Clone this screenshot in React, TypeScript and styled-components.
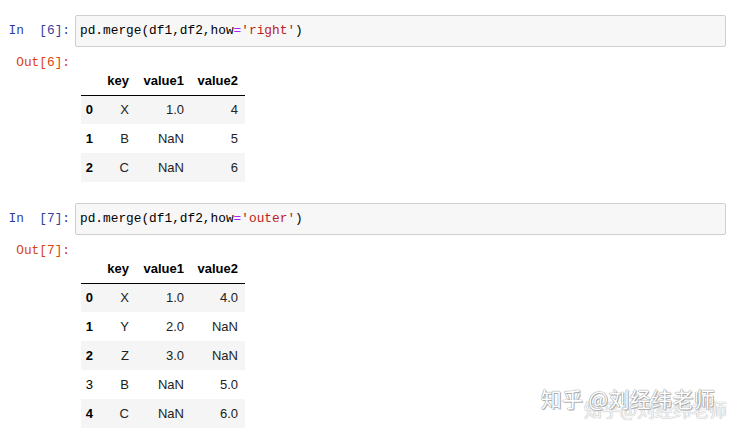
import styled, { createGlobalStyle } from "styled-components";

const GlobalStyle = createGlobalStyle`
  html, body {
    margin: 0;
    padding: 0;
    background: #fff;
  }
  body {
    width: 733px;
    height: 434px;
    overflow: hidden;
    position: relative;
  }
`;

const Notebook = styled.div`
  padding-top: 15px;
  font-family: "Liberation Sans", Arial, sans-serif;
`;

const Cell = styled.div`
  margin-bottom: 21px;
`;

const Row = styled.div`
  display: flex;
  align-items: flex-start;
`;

const Prompt = styled.div<{ $kind: "in" | "out" }>`
  width: 70px;
  padding-right: 5px;
  flex: none;
  text-align: right;
  font-family: "Liberation Mono", "Courier New", monospace;
  font-size: 12.8px;
  white-space: pre;
  color: ${(p) => (p.$kind === "in" ? "#303F9F" : "#D84315")};
  line-height: ${(p) => (p.$kind === "in" ? "32px" : "15px")};
  padding-top: ${(p) => (p.$kind === "in" ? "0" : "3px")};
`;

const InputBox = styled.div`
  flex: 1;
  margin-right: 7px;
  height: 32px;
  box-sizing: border-box;
  border: 1px solid #cfcfcf;
  border-radius: 2px;
  background: #f7f7f7;
  padding-left: 4px;
  font-family: "Liberation Mono", "Courier New", monospace;
  font-size: 12.8px;
  line-height: 30px;
  color: #000;
  white-space: pre;
`;

const Op = styled.span`
  color: #aa22ff;
`;

const Str = styled.span`
  color: #ba2121;
`;

const OutputRow = styled(Row)`
  margin-top: 5px;
`;

const Table = styled.table`
  margin-top: 15px;
  margin-left: 6px;
  border-collapse: collapse;
  table-layout: fixed;
  font-size: 13px;
  color: #000;
`;

const HeadCell = styled.th<{ $w: number }>`
  width: ${(p) => p.$w}px;
  box-sizing: border-box;
  height: 28px;
  padding: 0 7px 0 0;
  text-align: right;
  font-weight: bold;
  border-bottom: 1px solid #000;
  vertical-align: middle;
`;

const BodyRow = styled.tr<{ $shade: boolean }>`
  height: 29px;
  background: ${(p) => (p.$shade ? "#f5f5f5" : "#fff")};
`;

const IndexCell = styled.th<{ $bold: boolean }>`
  padding: 0 9px 0 0;
  text-align: right;
  font-weight: ${(p) => (p.$bold ? "bold" : "normal")};
  vertical-align: middle;
`;

const DataCell = styled.td`
  padding: 0 7px 0 0;
  text-align: right;
  vertical-align: middle;
  color: #222;
`;

const Watermark = styled.div`
  position: absolute;
  right: 18px;
  bottom: 21px;
  font-family: "Noto Sans CJK SC", sans-serif;
  font-size: 21px;
  letter-spacing: 0.3px;
  color: #fff;
  text-shadow: 0 0 1px #8a8a8a, 0 0 1px #8a8a8a, 1px 1px 0 #bbb;
  white-space: pre;
`;

const Ghost = styled.div`
  position: absolute;
  right: 6px;
  bottom: 12px;
  font-family: "Noto Sans CJK SC", sans-serif;
  font-size: 18px;
  color: #f4f4f4;
  text-shadow: 0 0 1px #b8b8b8, 0 0 1px #b8b8b8;
  white-space: pre;
`;

type DataRow = { idx: string; bold: boolean; cells: string[] };

const cols = [
  { label: "", w: 21 },
  { label: "key", w: 34 },
  { label: "value1", w: 55 },
  { label: "value2", w: 54 },
];

const cells = [
  {
    n: 6,
    how: "right",
    rows: [
      { idx: "0", bold: true, cells: ["X", "1.0", "4"] },
      { idx: "1", bold: true, cells: ["B", "NaN", "5"] },
      { idx: "2", bold: true, cells: ["C", "NaN", "6"] },
    ] as DataRow[],
  },
  {
    n: 7,
    how: "outer",
    rows: [
      { idx: "0", bold: true, cells: ["X", "1.0", "4.0"] },
      { idx: "1", bold: true, cells: ["Y", "2.0", "NaN"] },
      { idx: "2", bold: true, cells: ["Z", "3.0", "NaN"] },
      { idx: "3", bold: false, cells: ["B", "NaN", "5.0"] },
      { idx: "4", bold: true, cells: ["C", "NaN", "6.0"] },
    ] as DataRow[],
  },
];

function Frame({ rows }: { rows: DataRow[] }) {
  return (
    <Table>
      <thead>
        <tr>
          {cols.map((c) => (
            <HeadCell key={c.label} $w={c.w}>
              {c.label}
            </HeadCell>
          ))}
        </tr>
      </thead>
      <tbody>
        {rows.map((r, i) => (
          <BodyRow key={r.idx} $shade={i % 2 === 0}>
            <IndexCell $bold={r.bold}>{r.idx}</IndexCell>
            {r.cells.map((v, j) => (
              <DataCell key={j}>{v}</DataCell>
            ))}
          </BodyRow>
        ))}
      </tbody>
    </Table>
  );
}

export default function App() {
  return (
    <>
      <GlobalStyle />
      <Notebook>
        {cells.map((c) => (
          <Cell key={c.n}>
            <Row>
              <Prompt $kind="in">{`In  [${c.n}]:`}</Prompt>
              <InputBox>
                pd.merge(df1,df2,how<Op>=</Op>
                <Str>'{c.how}'</Str>)
              </InputBox>
            </Row>
            <OutputRow>
              <Prompt $kind="out">{`Out[${c.n}]:`}</Prompt>
              <Frame rows={c.rows} />
            </OutputRow>
          </Cell>
        ))}
      </Notebook>
      <Ghost>知乎@刘经纬老师</Ghost>
      <Watermark>知乎 @刘经纬老师</Watermark>
    </>
  );
}
